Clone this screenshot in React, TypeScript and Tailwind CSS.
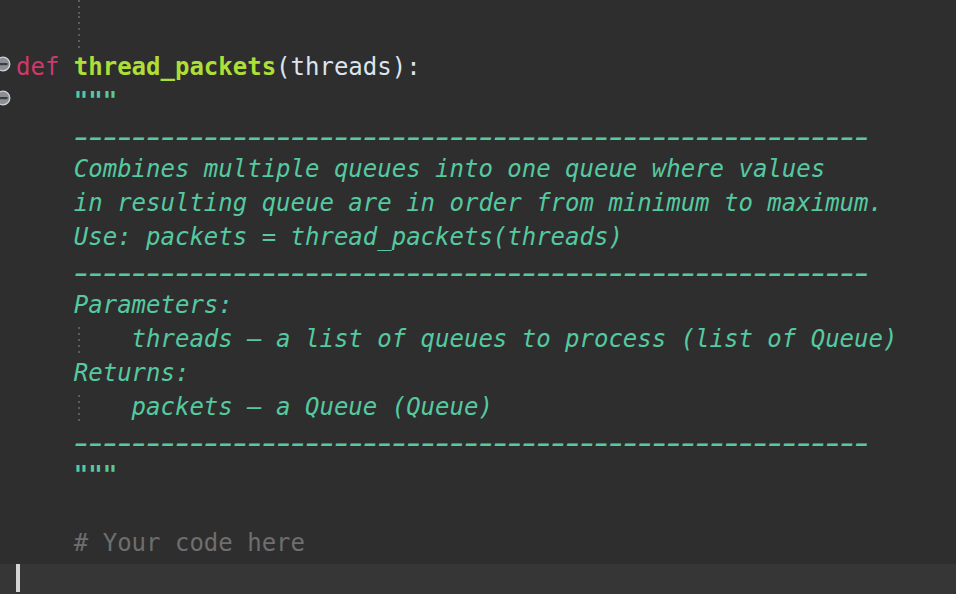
import React from "react";

const mono = "font-['DejaVu_Sans_Mono','Liberation_Mono',monospace]";
const doc = "italic text-[#55c9a0]";
const dashes = "–".repeat(55);

const Guide: React.FC<{ className?: string }> = ({ className = "" }) => (
  <span
    className={`absolute left-[62px] w-[2px] bg-[repeating-linear-gradient(to_bottom,#5c5c5c_0_2px,transparent_2px_6px)] ${className}`}
  />
);

const Fold: React.FC = () => (
  <svg width="16" height="16" viewBox="0 0 16 16" className="ml-[-5px] mt-[-6px] shrink-0">
    <circle cx="8" cy="8" r="6.8" fill="#8b8e93" stroke="#cfd2d6" strokeWidth="1.3" />
    <rect x="3.5" y="7" width="9" height="2.2" fill="#3a3c40" />
  </svg>
);

const Dashes: React.FC = () => (
  <span className={doc}>
    {"    "}
    <span className="relative top-[3px] font-['Liberation_Mono','DejaVu_Sans_Mono',monospace] font-bold tracking-[0.05px]">
      {dashes}
    </span>
  </span>
);

const Line: React.FC<{
  children?: React.ReactNode;
  fold?: boolean;
  guide?: boolean;
}> = ({ children, fold, guide }) => (
  <div className="flex h-[34px] items-center">
    <div className="flex w-[16px] shrink-0 items-center">{fold && <Fold />}</div>
    <div className="relative h-full flex items-center whitespace-pre">
      {guide && <Guide className="top-[5px] h-[30px]" />}
      {children}
    </div>
  </div>
);

export default function App() {
  return (
    <div className={`h-[594px] w-[956px] overflow-hidden bg-[#2e2e2e] text-[24px] leading-[34px] ${mono}`}>
      <div className="relative h-[16px]">
        <Guide className="top-0 h-[16px] ml-[16px]" />
      </div>
      <div className="relative">
        <Guide className="top-0 h-[36px] ml-[16px]" />
        <Line />
      </div>
      <Line fold>
        <span className="text-[#d1386a]">def </span>
        <span className="font-bold text-[#addf36]">thread_packets</span>
        <span className="text-[#dce4ee]">(threads):</span>
      </Line>
      <Line fold>
        <span className={`${doc} font-bold`}>{'    """'}</span>
      </Line>
      <Line>
        <Dashes />
      </Line>
      <Line>
        <span className={doc}>{"    Combines multiple queues into one queue where values"}</span>
      </Line>
      <Line>
        <span className={doc}>{"    in resulting queue are in order from minimum to maximum."}</span>
      </Line>
      <Line>
        <span className={doc}>{"    Use: packets = thread_packets(threads)"}</span>
      </Line>
      <Line>
        <Dashes />
      </Line>
      <Line>
        <span className={doc}>{"    Parameters:"}</span>
      </Line>
      <Line guide>
        <span className={doc}>{"        threads – a list of queues to process (list of Queue)"}</span>
      </Line>
      <Line>
        <span className={doc}>{"    Returns:"}</span>
      </Line>
      <Line guide>
        <span className={doc}>{"        packets – a Queue (Queue)"}</span>
      </Line>
      <Line>
        <Dashes />
      </Line>
      <Line>
        <span className={`${doc} font-bold`}>{'    """'}</span>
      </Line>
      <Line />
      <Line>
        <span className="text-[#6e6e6e]">{"    # Your code here"}</span>
      </Line>
      <div className="mt-[4px] flex h-[30px] items-start bg-[#363636]">
        <span className="ml-[16px] h-[28px] w-[4px] bg-[#d4d4d4]" />
      </div>
    </div>
  );
}
